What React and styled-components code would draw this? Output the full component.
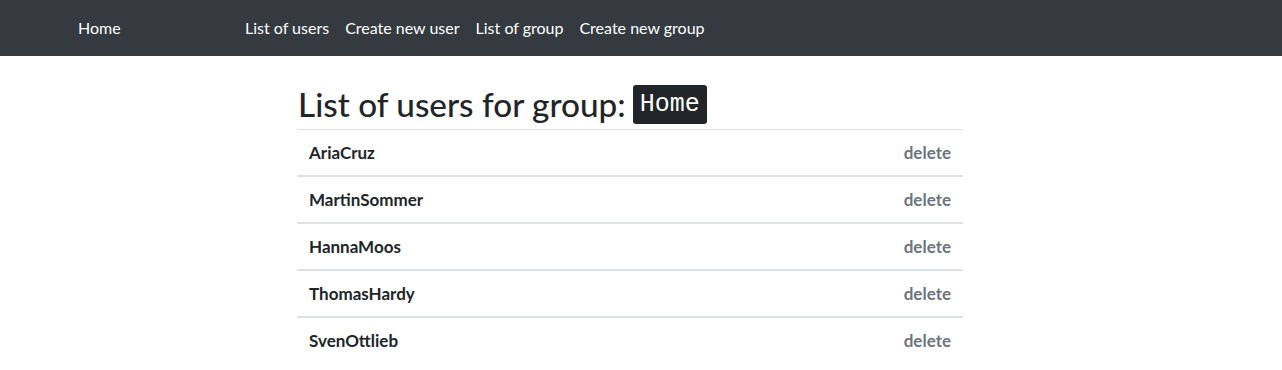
import React from "react";
import styled, { createGlobalStyle } from "styled-components";

const GlobalStyle = createGlobalStyle`
  body {
    margin: 0;
    background: #fff;
    font-family: "Lato", "Noto Sans", sans-serif;
    color: #212529;
  }
`;

const Navbar = styled.nav`
  height: 56px;
  box-sizing: border-box;
  padding: 0 0 2px 78px;
  background-color: #343a40;
  display: flex;
  align-items: center;
`;

const Brand = styled.a`
  color: #fff;
  font-size: 16px;
  width: 167px;
  text-decoration: none;
`;

const NavLinks = styled.div`
  display: flex;
  gap: 16px;
`;

const NavLink = styled.a`
  color: #fff;
  font-size: 16px;
  text-decoration: none;
`;

const Main = styled.main`
  width: 666px;
  margin-left: 297px;
  padding-top: 25px;
`;

const Title = styled.h2`
  margin: 0 0 2px 1px;
  font-size: 33.3px;
  font-weight: 500;
  line-height: 46px;
  display: flex;
  align-items: center;
  gap: 7px;
`;

const Badge = styled.code`
  background: #212529;
  color: #fff;
  font-family: "Liberation Mono", "DejaVu Sans Mono", monospace;
  font-size: 25px;
  font-weight: 400;
  border-radius: 3px;
  padding: 0 7px;
  height: 39px;
  line-height: 39px;
`;

const Table = styled.div`
  display: flex;
  flex-direction: column;
`;

const Row = styled.div`
  display: flex;
  justify-content: space-between;
  align-items: center;
  height: 45px;
  padding: 0 12px;
  border-top: ${props => (props.first ? "1px solid #dee2e6" : "2px solid #dee2e6")};
  font-size: 17px;
  font-weight: 700;
`;

const Name = styled.span`
  color: #212529;
`;

const Delete = styled.a`
  color: #6c757d;
  cursor: pointer;
`;

const users = ["AriaCruz", "MartinSommer", "HannaMoos", "ThomasHardy", "SvenOttlieb"];

export default function App() {
  return (
    <>
      <GlobalStyle />
      <Navbar>
        <Brand href="#">Home</Brand>
        <NavLinks>
          <NavLink href="#">List of users</NavLink>
          <NavLink href="#">Create new user</NavLink>
          <NavLink href="#">List of group</NavLink>
          <NavLink href="#">Create new group</NavLink>
        </NavLinks>
      </Navbar>
      <Main>
        <Title>
          List of users for group: <Badge>Home</Badge>
        </Title>
        <Table>
          {users.map((u, i) => (
            <Row key={u} first={i === 0}>
              <Name>{u}</Name>
              <Delete>delete</Delete>
            </Row>
          ))}
        </Table>
      </Main>
    </>
  );
}
